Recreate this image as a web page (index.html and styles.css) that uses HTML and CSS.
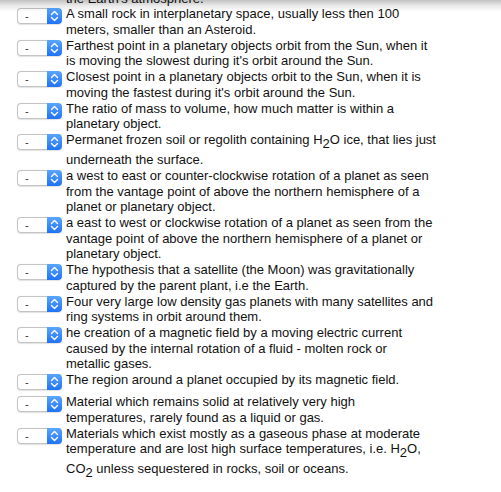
FILE: index.html
```html
<!DOCTYPE html>
<html>
<head>
<meta charset="utf-8">
<link rel="stylesheet" href="styles.css">
</head>
<body>
<div class="shade"></div>
<div class="list">
  <div class="prev">the Earth's atmosphere.</div>

  <div class="row"><div class="sel"><span class="val">-</span><span class="btn"><svg viewBox="0 0 15 16" width="15" height="16"><polyline points="4.5,6.5 7.5,3.5 10.5,6.5"/><polyline points="4.5,9.5 7.5,12.5 10.5,9.5"/></svg></span></div>
    <div class="txt">A small rock in interplanetary space, usually less then 100<br>meters, smaller than an Asteroid.</div></div>

  <div class="row"><div class="sel"><span class="val">-</span><span class="btn"><svg viewBox="0 0 15 16" width="15" height="16"><polyline points="4.5,6.5 7.5,3.5 10.5,6.5"/><polyline points="4.5,9.5 7.5,12.5 10.5,9.5"/></svg></span></div>
    <div class="txt">Farthest point in a planetary objects orbit from the Sun, when it<br>is moving the slowest during it's orbit around the Sun.</div></div>

  <div class="row"><div class="sel"><span class="val">-</span><span class="btn"><svg viewBox="0 0 15 16" width="15" height="16"><polyline points="4.5,6.5 7.5,3.5 10.5,6.5"/><polyline points="4.5,9.5 7.5,12.5 10.5,9.5"/></svg></span></div>
    <div class="txt">Closest point in a planetary objects orbit to the Sun, when it is<br>moving the fastest during it's orbit around the Sun.</div></div>

  <div class="row"><div class="sel"><span class="val">-</span><span class="btn"><svg viewBox="0 0 15 16" width="15" height="16"><polyline points="4.5,6.5 7.5,3.5 10.5,6.5"/><polyline points="4.5,9.5 7.5,12.5 10.5,9.5"/></svg></span></div>
    <div class="txt">The ratio of mass to volume, how much matter is within a<br>planetary object.</div></div>

  <div class="row"><div class="sel"><span class="val">-</span><span class="btn"><svg viewBox="0 0 15 16" width="15" height="16"><polyline points="4.5,6.5 7.5,3.5 10.5,6.5"/><polyline points="4.5,9.5 7.5,12.5 10.5,9.5"/></svg></span></div>
    <div class="txt">Permanet frozen soil or regolith containing H<sub>2</sub>O ice, that lies just<br>underneath the surface.</div></div>

  <div class="row"><div class="sel"><span class="val">-</span><span class="btn"><svg viewBox="0 0 15 16" width="15" height="16"><polyline points="4.5,6.5 7.5,3.5 10.5,6.5"/><polyline points="4.5,9.5 7.5,12.5 10.5,9.5"/></svg></span></div>
    <div class="txt">a west to east or counter-clockwise rotation of a planet as seen<br>from the vantage point of above the northern hemisphere of a<br>planet or planetary object.</div></div>

  <div class="row"><div class="sel"><span class="val">-</span><span class="btn"><svg viewBox="0 0 15 16" width="15" height="16"><polyline points="4.5,6.5 7.5,3.5 10.5,6.5"/><polyline points="4.5,9.5 7.5,12.5 10.5,9.5"/></svg></span></div>
    <div class="txt">a east to west or clockwise rotation of a planet as seen from the<br>vantage point of above the northern hemisphere of a planet or<br>planetary object.</div></div>

  <div class="row"><div class="sel"><span class="val">-</span><span class="btn"><svg viewBox="0 0 15 16" width="15" height="16"><polyline points="4.5,6.5 7.5,3.5 10.5,6.5"/><polyline points="4.5,9.5 7.5,12.5 10.5,9.5"/></svg></span></div>
    <div class="txt">The hypothesis that a satellite (the Moon) was gravitationally<br>captured by the parent plant, i.e the Earth.</div></div>

  <div class="row"><div class="sel"><span class="val">-</span><span class="btn"><svg viewBox="0 0 15 16" width="15" height="16"><polyline points="4.5,6.5 7.5,3.5 10.5,6.5"/><polyline points="4.5,9.5 7.5,12.5 10.5,9.5"/></svg></span></div>
    <div class="txt">Four very large low density gas planets with many satellites and<br>ring systems in orbit around them.</div></div>

  <div class="row"><div class="sel"><span class="val">-</span><span class="btn"><svg viewBox="0 0 15 16" width="15" height="16"><polyline points="4.5,6.5 7.5,3.5 10.5,6.5"/><polyline points="4.5,9.5 7.5,12.5 10.5,9.5"/></svg></span></div>
    <div class="txt">he creation of a magnetic field by a moving electric current<br>caused by the internal rotation of a fluid - molten rock or<br>metallic gases.</div></div>

  <div class="row single"><div class="sel"><span class="val">-</span><span class="btn"><svg viewBox="0 0 15 16" width="15" height="16"><polyline points="4.5,6.5 7.5,3.5 10.5,6.5"/><polyline points="4.5,9.5 7.5,12.5 10.5,9.5"/></svg></span></div>
    <div class="txt">The region around a planet occupied by its magnetic field.</div></div>

  <div class="row"><div class="sel"><span class="val">-</span><span class="btn"><svg viewBox="0 0 15 16" width="15" height="16"><polyline points="4.5,6.5 7.5,3.5 10.5,6.5"/><polyline points="4.5,9.5 7.5,12.5 10.5,9.5"/></svg></span></div>
    <div class="txt">Material which remains solid at relatively very high<br>temperatures, rarely found as a liquid or gas.</div></div>

  <div class="row"><div class="sel"><span class="val">-</span><span class="btn"><svg viewBox="0 0 15 16" width="15" height="16"><polyline points="4.5,6.5 7.5,3.5 10.5,6.5"/><polyline points="4.5,9.5 7.5,12.5 10.5,9.5"/></svg></span></div>
    <div class="txt">Materials which exist mostly as a gaseous phase at moderate<br>temperature and are lost high surface temperatures, i.e. H<sub>2</sub>O,<br>CO<sub>2</sub> unless sequestered in rocks, soil or oceans.</div></div>
</div>
</body>
</html>
```
FILE: styles.css
```css
html, body {
  margin: 0;
  padding: 0;
  background: #ffffff;
}
body {
  font-family: "Liberation Sans", Arial, Helvetica, sans-serif;
  font-size: 13px;
  color: #111111;
  overflow: hidden;
}
.shade {
  position: fixed;
  top: 0;
  left: 0;
  right: 0;
  height: 12px;
  background: linear-gradient(to bottom, rgba(0,0,0,0.24), rgba(0,0,0,0.08) 50%, rgba(0,0,0,0));
  pointer-events: none;
  z-index: 2;
}
.list {
  padding-left: 17px;
}
.prev {
  margin-top: -9.5px;
  margin-left: 49px;
  line-height: 15.5px;
  white-space: nowrap;
}
.row {
  display: flex;
  align-items: flex-start;
  gap: 4px;
  margin-bottom: 0.5px;
}
.row.single {
  min-height: 21.5px;
}
.sel {
  display: flex;
  width: 45px;
  height: 16px;
  margin-top: 2px;
  flex: none;
  border-radius: 4px;
  box-shadow: 0 0.5px 1px rgba(0,0,0,0.12);
}
.val {
  flex: 1;
  box-sizing: border-box;
  height: 16px;
  border: 1px solid #c4c4c4;
  border-right: none;
  border-radius: 4px 0 0 4px;
  background: #ffffff;
  font-size: 11px;
  line-height: 14px;
  padding-left: 7px;
  color: #333333;
}
.btn {
  width: 15px;
  height: 16px;
  border-radius: 0 4px 4px 0;
  background: linear-gradient(to bottom, #5aa6fb, #1f72f4);
}
.btn svg {
  display: block;
}
.btn polyline {
  fill: none;
  stroke: #ffffff;
  stroke-width: 1.4;
  stroke-linecap: round;
  stroke-linejoin: round;
}
.txt {
  line-height: 15.5px;
  white-space: nowrap;
}
sub {
  font-size: 13px;
  vertical-align: -3.5px;
  line-height: 17.5px;
}
```
